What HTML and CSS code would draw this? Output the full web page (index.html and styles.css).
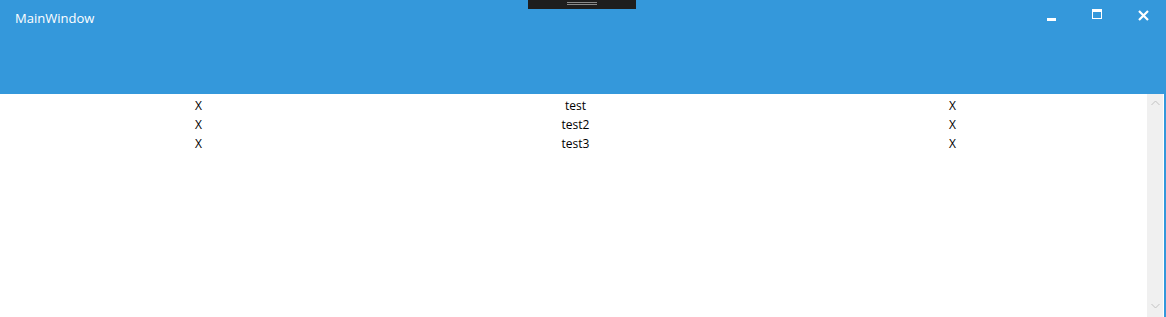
FILE: index.html
```html
<!DOCTYPE html>
<html>
<head>
<meta charset="utf-8">
<link rel="stylesheet" href="styles.css">
</head>
<body>
<div class="window">
  <header class="titlebar">
    <div class="title">MainWindow</div>
    <div class="grip"><span class="grip-line"></span><span class="grip-line"></span></div>
    <div class="controls">
      <div class="ctl ctl-min"><span class="min-bar"></span></div>
      <div class="ctl ctl-max"><span class="max-box"></span></div>
      <div class="ctl ctl-close">
        <svg width="11" height="11" viewBox="0 0 11 11"><path d="M1 1L10 10M10 1L1 10" stroke="#fff" stroke-width="2.2" fill="none"/></svg>
      </div>
    </div>
  </header>
  <div class="body">
    <div class="list">
      <div class="row"><span class="cell">X</span><span class="cell">test</span><span class="cell">X</span></div>
      <div class="row"><span class="cell">X</span><span class="cell">test2</span><span class="cell">X</span></div>
      <div class="row"><span class="cell">X</span><span class="cell">test3</span><span class="cell">X</span></div>
    </div>
    <div class="scrollbar">
      <svg class="arrow" width="9" height="6" viewBox="0 0 9 6"><path d="M0.5 5L4.5 1L8.5 5" stroke="#c2c2c2" stroke-width="1" fill="none"/></svg>
      <svg class="arrow" width="9" height="6" viewBox="0 0 9 6"><path d="M0.5 1L4.5 5L8.5 1" stroke="#c2c2c2" stroke-width="1" fill="none"/></svg>
    </div>
  </div>
</div>
</body>
</html>
```
FILE: styles.css
```css
html, body {
  margin: 0;
  padding: 0;
  height: 100%;
  background: #fff;
}
.window {
  height: 317px;
  display: flex;
  flex-direction: column;
  font-family: "Segoe UI", "Open Sans", "Noto Sans", sans-serif;
  border-right: 2px solid #3498db;
  box-sizing: border-box;
}
.titlebar {
  position: relative;
  height: 94px;
  flex: none;
  background: #3498db;
  display: flex;
  align-items: flex-start;
  justify-content: space-between;
}
.title {
  color: #fff;
  font-size: 13px;
  padding: 9px 0 0 15px;
  line-height: 18px;
}
.grip {
  position: absolute;
  left: 528px;
  top: 0;
  width: 108px;
  height: 9px;
  background: #1e1e1e;
  display: flex;
  flex-direction: column;
  align-items: center;
  padding-top: 2px;
  box-sizing: border-box;
  gap: 1px;
}
.grip-line {
  display: block;
  width: 30px;
  height: 1px;
  background: #8a8a8a;
}
.controls {
  display: flex;
  margin-right: -2px;
}
.ctl {
  width: 46px;
  height: 30px;
  display: flex;
  justify-content: center;
}
.min-bar {
  display: block;
  width: 9px;
  height: 3px;
  background: #fff;
  margin-top: 18px;
}
.max-box {
  display: block;
  width: 10px;
  height: 10px;
  box-sizing: border-box;
  border: 1px solid #fff;
  border-top-width: 3px;
  margin-top: 9px;
}
.ctl-close svg {
  margin-top: 10px;
}
.body {
  flex: 1;
  display: flex;
}
.list {
  flex: 1;
  padding: 0 6px 0 10px;
}
.row {
  display: grid;
  grid-template-columns: 1fr 1fr 1fr;
  height: 19px;
  align-items: center;
  font-size: 12px;
  color: #000;
}
.row:first-child {
  margin-top: 2px;
}
.cell {
  text-align: center;
}
.scrollbar {
  width: 17px;
  background: #f0f0f0;
  border-right: 1px solid #fff;
  display: flex;
  flex-direction: column;
  justify-content: space-between;
  align-items: center;
  padding: 6px 0 8px;
  box-sizing: border-box;
}
```
